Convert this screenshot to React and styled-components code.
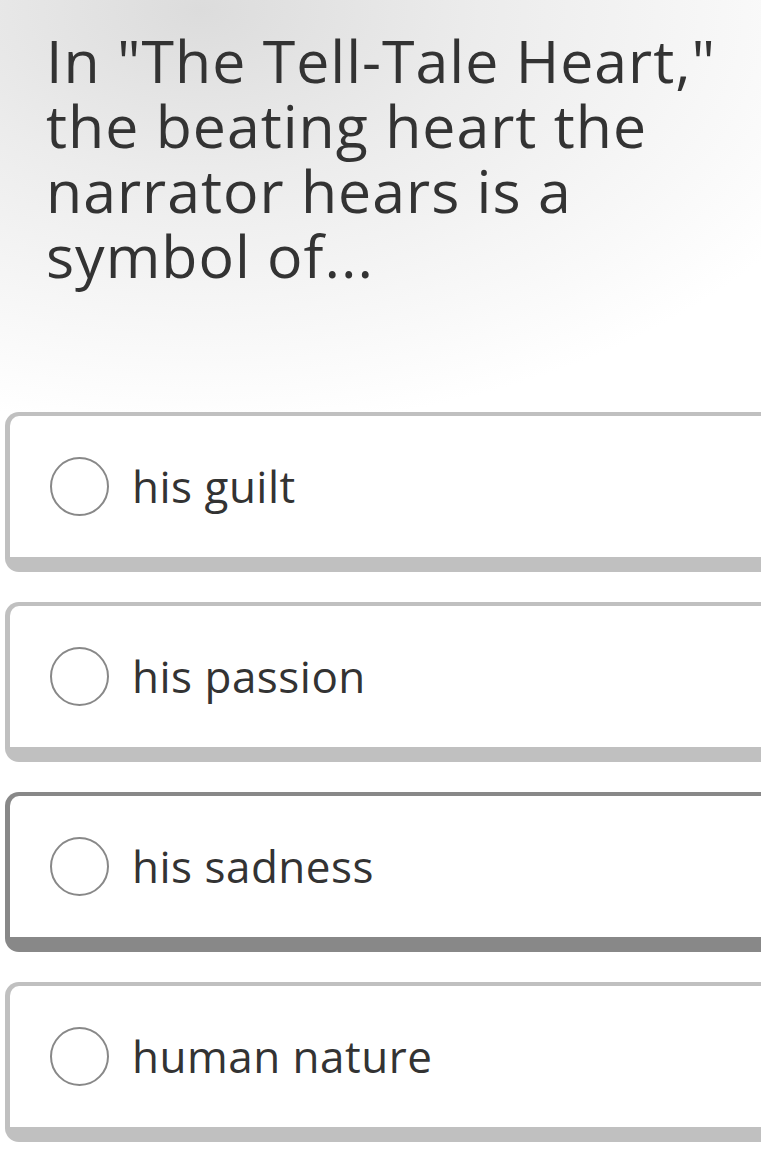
import styled, { createGlobalStyle } from "styled-components";

const GlobalStyle = createGlobalStyle`
  html, body {
    margin: 0;
    padding: 0;
    background: #fff;
    overflow-x: hidden;
  }
  body {
    font-family: "Open Sans", "Noto Sans", sans-serif;
    color: #333;
  }
`;

const options = [
  { id: "a", label: "his guilt" },
  { id: "b", label: "his passion" },
  { id: "c", label: "his sadness", active: true },
  { id: "d", label: "human nature" },
];

const App = () => {
  return (
    <>
      <GlobalStyle />
      <Page>
        <Question>
          In "The Tell-Tale Heart," the beating heart the narrator hears is a
          symbol of...
        </Question>

        <OptionList>
          {options.map((opt) => (
            <Option key={opt.id} $active={opt.active}>
              <Radio />
              <Label>{opt.label}</Label>
            </Option>
          ))}
        </OptionList>
      </Page>
    </>
  );
};

export default App;

const Page = styled.div`
  min-height: 1166px;
  width: 761px;
  background: radial-gradient(
    ellipse 700px 420px at 200px 10px,
    #dcdcdc 0%,
    #ececec 40%,
    #ffffff 100%
  );
  overflow: hidden;
`;

const Question = styled.h1`
  box-sizing: border-box;
  width: 761px;
  margin: 0;
  padding: 28px 20px 0 46px;
  font-family: "Open Sans", "Noto Sans", sans-serif;
  font-weight: 400;
  font-size: 59px;
  line-height: 65px;
  letter-spacing: 1px;
  color: #333;
`;

const OptionList = styled.div`
  display: flex;
  flex-direction: column;
  gap: 30px;
  padding-top: 124px;
  padding-left: 5px;
`;

const Option = styled.div`
  box-sizing: border-box;
  height: 160px;
  width: 800px;
  background: #fff;
  border: solid ${(p) => (p.$active ? "#888888" : "#c0c0c0")};
  border-width: 4px 0 15px 5px;
  border-radius: 14px;
  display: flex;
  align-items: center;
  padding-left: 40px;
  gap: 23px;
`;

const Radio = styled.span`
  box-sizing: border-box;
  width: 59px;
  height: 59px;
  border-radius: 50%;
  border: 2px solid #888;
  flex-shrink: 0;
`;

const Label = styled.span`
  font-size: 44px;
  line-height: 1;
  letter-spacing: 0.5px;
  color: #333;
  margin-top: -2px;
`;
